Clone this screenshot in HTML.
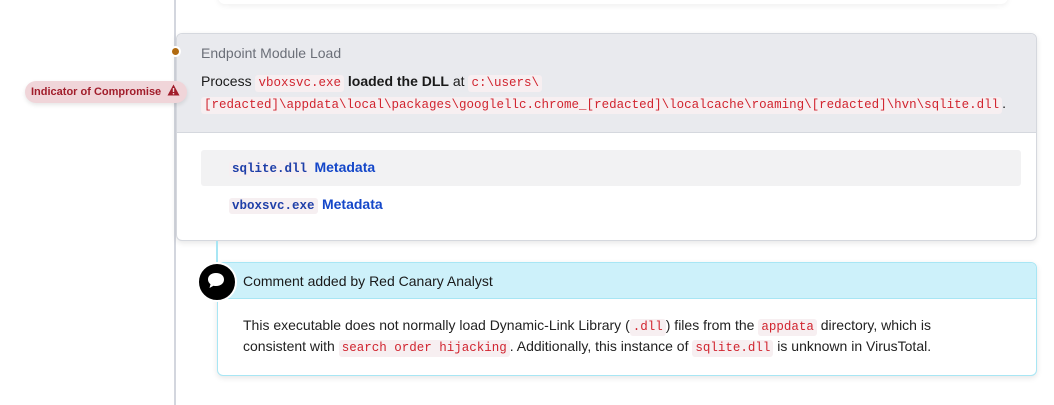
<!DOCTYPE html>
<html><head><style>
*{box-sizing:border-box;margin:0;padding:0}
body{width:1054px;height:405px;background:#fff;font-family:"Liberation Sans",sans-serif;position:relative;overflow:hidden;color:#1a1a1a}
.code{font-family:"Liberation Mono",monospace;font-size:12.5px;color:#d1242f;background:#f7eff1;border-radius:3px;padding:0 3px;display:inline-block;line-height:17px}
.bcode{font-family:"Liberation Mono",monospace;font-size:12.5px;color:#1f3fa8;background:#f6eff1;border-radius:3px;padding:1px 3px;font-weight:bold}
.meta{color:#1447c9;font-weight:bold;font-size:14px}
</style></head><body>
<div style="position:absolute;left:218px;top:-10px;width:790px;height:14px;border-radius:8px;box-shadow:0 2px 6px rgba(0,0,0,.06);background:#fff"></div>
<div style="position:absolute;left:174px;top:0;width:2px;height:405px;background:#d3d6de"></div>
<div style="position:absolute;left:176px;top:33px;width:861px;height:208px;border:1px solid #d5d8de;border-radius:6px;background:#fff;box-shadow:0 2px 6px rgba(0,0,0,.1);overflow:hidden">
 <div style="background:#e9eaee;height:99px;border-bottom:1px solid #d5d8de;padding:11px 0 0 24px">
  <div style="color:#6b6f78;font-size:14px">Endpoint Module Load</div>
  <div style="font-size:14px;line-height:22px;margin-top:9px">Process <span class="code">vboxsvc.exe</span> <b>loaded the DLL</b> at <span class="code">c:\users\</span><br><span class="code">[redacted]\appdata\local\packages\googlellc.chrome_[redacted]\localcache\roaming\[redacted]\hvn\sqlite.dll</span>.</div>
 </div>
 <div style="position:absolute;left:24px;top:116px;width:820px;height:36px;background:#f2f2f3;border-radius:3px;padding:9px 0 0 28px"><span class="bcode">sqlite.dll</span> <span class="meta">Metadata</span></div>
 <div style="position:absolute;left:52px;top:162px"><span class="bcode">vboxsvc.exe</span> <span class="meta">Metadata</span></div>
</div>
<div style="position:absolute;left:170px;top:46px;width:11px;height:11px;border-radius:50%;background:#b06a10;border:2px solid #fff"></div>
<div style="position:absolute;left:25px;top:81px;width:162px;height:22px;border-radius:11px;background:#f0d5d9;color:#a11d2b;font-weight:bold;font-size:11px;line-height:22px;padding-left:6px;box-shadow:0 2px 4px rgba(0,0,0,.1)">Indicator of Compromise <svg width="13" height="12" viewBox="0 0 13 12" style="vertical-align:-1px;margin-left:3px"><path d="M6.5 0.5L12.5 11.5H0.5Z" fill="#a11d2b"/><rect x="5.8" y="4" width="1.4" height="4" fill="#f0d5d9"/><rect x="5.8" y="9" width="1.4" height="1.4" fill="#f0d5d9"/></svg></div>
<div style="position:absolute;left:216px;top:241px;width:2px;height:22px;background:#a8e6f4"></div>
<div style="position:absolute;left:217px;top:262px;width:820px;height:114px;border:1px solid #a8e6f4;border-radius:6px;background:#fff;box-shadow:0 2px 6px rgba(0,0,0,.1);overflow:hidden">
 <div style="height:36px;background:#cdf1fa;border-bottom:1px solid #a8e6f4;padding:10px 0 0 25px;font-size:14px">Comment added by Red Canary Analyst</div>
 <div style="padding:16px 0 0 25px;font-size:14px;line-height:21px;color:#222">This executable does not normally load Dynamic-Link Library (<span class="code">.dll</span>) files from the <span class="code">appdata</span> directory, which is<br>consistent with <span class="code">search order hijacking</span>. Additionally, this instance of <span class="code">sqlite.dll</span> is unknown in VirusTotal.</div>
</div>
<div style="position:absolute;left:197px;top:262px;width:40px;height:40px;border-radius:50%;background:#000;border:2px solid #fff"></div>
<svg style="position:absolute;left:205px;top:271px" width="22" height="20" viewBox="0 0 22 20"><path d="M11 2C6 2 3 4.8 3 8.5c0 2 1 3.6 2.5 4.7L4.5 17l4-2.3c.8.2 1.6.3 2.5.3 5 0 8-2.8 8-6.5S16 2 11 2z" fill="#fff"/></svg>
</body></html>
